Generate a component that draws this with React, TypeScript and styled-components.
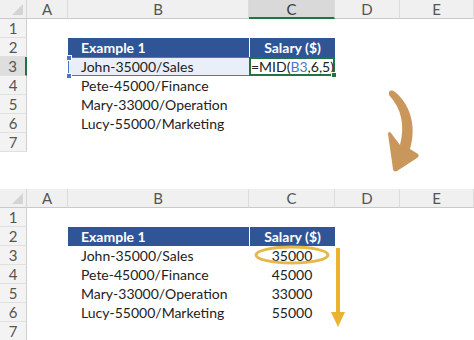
import React from 'react'
import styled, { createGlobalStyle, css } from 'styled-components'

const GlobalStyle = createGlobalStyle`
  body {
    margin: 0;
    background: #fff;
    font-family: Lato, 'Liberation Sans', sans-serif;
  }
`

const Page = styled.div`
  position: relative;
  width: 474px;
  height: 340px;
  overflow: hidden;
  display: flex;
  flex-direction: column;
  gap: 37px;
  background: #fff;
`

const Sheet = styled.div`
  position: relative;
  display: grid;
  grid-template-columns: 27px 41px 181px 86px 65px 1fr;
  grid-auto-rows: 19px;
  font-size: 14px;
  color: #222;
`

const Corner = styled.div`
  position: relative;
  background: #f0f0f0;
  border-bottom: 1px solid #c9c9c9;
  border-right: 1px solid #d6d6d6;
  box-sizing: border-box;

  &::after {
    content: '';
    position: absolute;
    right: 3px;
    bottom: 3px;
    border-left: 11px solid transparent;
    border-bottom: 11px solid #d4d4d4;
  }
`

const ColHeader = styled.div<{ $active?: boolean }>`
  display: flex;
  align-items: center;
  justify-content: center;
  box-sizing: border-box;
  background: ${({ $active }) => ($active ? '#d9d9d9' : '#f0f0f0')};
  border-right: 1px solid #dcdcdc;
  border-bottom: ${({ $active }) => ($active ? '2px solid #217346' : '1px solid #c9c9c9')};
  color: ${({ $active }) => ($active ? '#3a3a3a' : '#555')};
  font-size: 15px;
  padding-top: ${({ $active }) => ($active ? '1px' : '0')};
`

const RowHeader = styled.div<{ $active?: boolean }>`
  display: flex;
  align-items: center;
  justify-content: center;
  box-sizing: border-box;
  background: ${({ $active }) => ($active ? '#dedede' : '#f3f3f3')};
  border-bottom: 1px solid #e0e0e0;
  border-right: ${({ $active }) => ($active ? '2px solid #217346' : '1px solid #d0d0d0')};
  color: #555;
  font-size: 15px;
`

const Cell = styled.div<{ $head?: boolean; $divider?: boolean; $align?: 'left' | 'center' }>`
  display: flex;
  align-items: center;
  justify-content: ${({ $align }) => ($align === 'center' ? 'center' : 'flex-start')};
  box-sizing: border-box;
  padding-left: ${({ $align }) => ($align === 'center' ? '0' : '13px')};
  white-space: nowrap;
  ${({ $head }) =>
    $head &&
    css`
      background: #2f5597;
      color: #fff;
      font-weight: 700;
    `}
  ${({ $divider }) =>
    $divider &&
    css`
      border-left: 1px solid #fff;
    `}
`

const RefCell = styled(Cell)`
  position: relative;
  background: #e9eff9;
  border: 1px solid #4a78c8;
  border-right: none;
  padding-left: 12px;
`

const ActiveCell = styled.div`
  position: relative;
  display: flex;
  align-items: center;
  box-sizing: border-box;
  border: 2px solid #217346;
  padding-left: 0;
  white-space: nowrap;
`

const Handle = styled.span<{ $x: 'left' | 'right'; $y: 'top' | 'bottom'; $green?: boolean }>`
  position: absolute;
  width: 4px;
  height: 4px;
  background: ${({ $green }) => ($green ? '#217346' : '#4a78c8')};
  border: 1px solid #fff;
  ${({ $x }) => ($x === 'left' ? 'left: -3px;' : 'right: -4px;')}
  ${({ $y }) => ($y === 'top' ? 'top: -3px;' : 'bottom: -4px;')}
`

const Ref = styled.span`
  color: #4a78c8;
`

const Overlay = styled.svg`
  position: absolute;
  pointer-events: none;
`

const columns = ['A', 'B', 'C', 'D', 'E']
const rows = [
  { name: 'John-35000/Sales', salary: '35000' },
  { name: 'Pete-45000/Finance', salary: '45000' },
  { name: 'Mary-33000/Operation', salary: '33000' },
  { name: 'Lucy-55000/Marketing', salary: '55000' },
]

const HeaderRow = ({ activeCol }: { activeCol?: string }) => (
  <>
    <Corner />
    {columns.map((c) => (
      <ColHeader key={c} $active={c === activeCol}>
        {c}
      </ColHeader>
    ))}
  </>
)

const TitleRow = () => (
  <>
    <RowHeader>2</RowHeader>
    <Cell />
    <Cell $head>Example 1</Cell>
    <Cell $head $divider $align="center">
      Salary ($)
    </Cell>
    <Cell />
    <Cell />
  </>
)

const EmptyRow = ({ n }: { n: number }) => (
  <>
    <RowHeader>{n}</RowHeader>
    <Cell />
    <Cell />
    <Cell />
    <Cell />
    <Cell />
  </>
)

const BeforeSheet = () => (
  <Sheet>
    <HeaderRow activeCol="C" />
    <EmptyRow n={1} />
    <TitleRow />
    {rows.map((r, i) => {
      const n = i + 3
      if (i === 0) {
        return (
          <React.Fragment key={n}>
            <RowHeader $active>{n}</RowHeader>
            <Cell />
            <RefCell>
              {r.name}
              <Handle $x="left" $y="top" />
              <Handle $x="left" $y="bottom" />
            </RefCell>
            <ActiveCell>
              =MID(<Ref>B3</Ref>,6,5)
              <Handle $x="right" $y="bottom" $green />
            </ActiveCell>
            <Cell />
            <Cell />
          </React.Fragment>
        )
      }
      return (
        <React.Fragment key={n}>
          <RowHeader>{n}</RowHeader>
          <Cell />
          <Cell>{r.name}</Cell>
          <Cell />
          <Cell />
          <Cell />
        </React.Fragment>
      )
    })}
    <EmptyRow n={7} />
    <Overlay width="46" height="92" viewBox="0 0 46 92" style={{ left: 380, top: 88 }}>
      <path
        d="M9 4 C10 2 13 2 15 4 C30 16 37 38 30 61 L38 66 C39 67 39 69 37 70 L17 83 C15 84 13 83 13 81 L8 46 C8 44 10 43 11 45 L20 57 C25 38 22 21 9 7 Z"
        fill="#c9965c"
      />
    </Overlay>
  </Sheet>
)

const AfterSheet = () => (
  <Sheet>
    <HeaderRow />
    <EmptyRow n={1} />
    <TitleRow />
    {rows.map((r, i) => (
      <React.Fragment key={i}>
        <RowHeader>{i + 3}</RowHeader>
        <Cell />
        <Cell>{r.name}</Cell>
        <Cell $align="center">{r.salary}</Cell>
        <Cell />
        <Cell />
      </React.Fragment>
    ))}
    <EmptyRow n={7} />
    <Overlay width="80" height="22" viewBox="0 0 80 22" style={{ left: 253, top: 55 }}>
      <ellipse cx="39" cy="11" rx="36" ry="8" fill="none" stroke="#e6b84c" strokeWidth="3" />
    </Overlay>
    <Overlay width="20" height="86" viewBox="0 0 20 86" style={{ left: 328, top: 57 }}>
      <rect x="8" y="2" width="4" height="68" fill="#edb22f" />
      <polygon points="3,66 17,66 10,81" fill="#edb22f" />
    </Overlay>
  </Sheet>
)

export default function App() {
  return (
    <Page>
      <GlobalStyle />
      <BeforeSheet />
      <AfterSheet />
    </Page>
  )
}
